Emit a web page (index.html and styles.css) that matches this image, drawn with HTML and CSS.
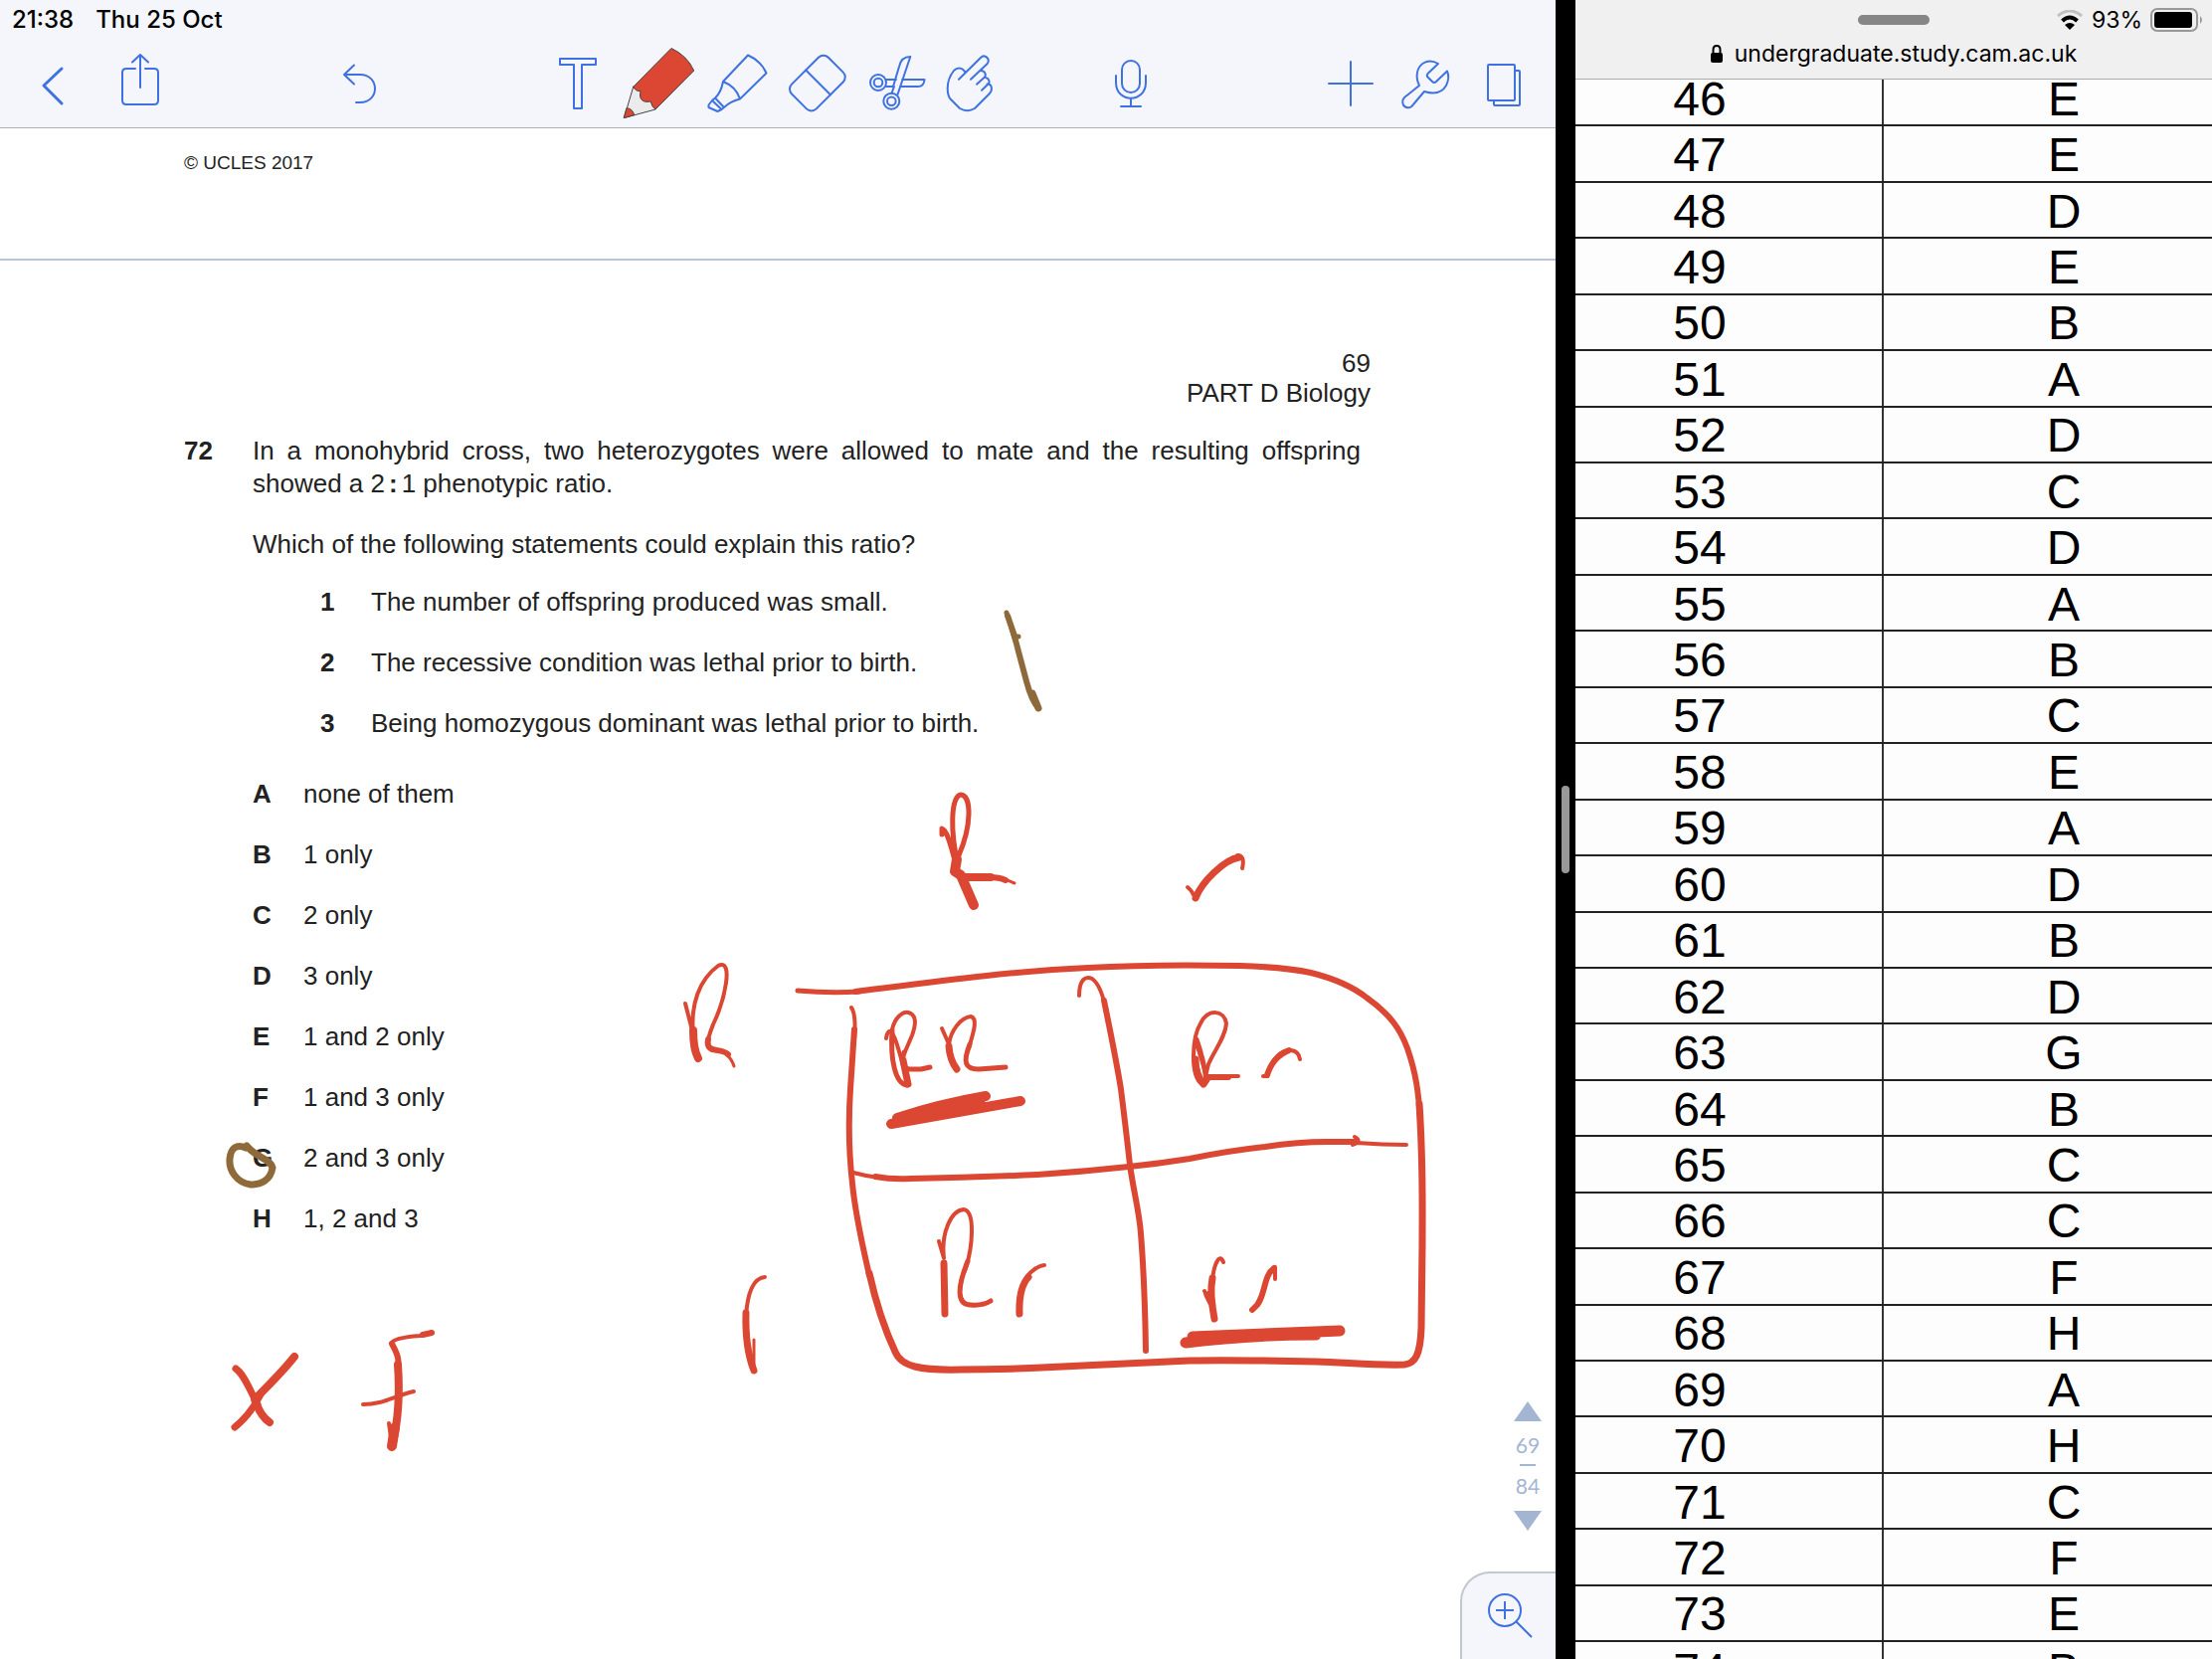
FILE: index.html
```
<!DOCTYPE html>
<html lang="en">
<head>
<meta charset="UTF-8">
<meta name="viewport" content="width=device-width, initial-scale=1.0">
<title>Past paper notes</title>

<link rel="stylesheet" href="styles.css">
</head>

<body>

<main class="notes">
  <header class="topbar">
    <div class="status">
      <span>21:38</span>
      <span>Thu 25 Oct</span>
    </div>

    <nav class="tools">
      <button class="tool" aria-label="Back"><svg viewBox="21 44 80 80"><path class="thick" d="M62 69L44 86L62 104"/></svg></button>
      <button class="tool" aria-label="Share"><svg viewBox="101 44 80 80"><path d="M136 69h-9q-4 0-4 4v28q0 4 4 4h28q4 0 4-4v-28q0-4-4-4h-9M141 88V55M133 62.500l8-7.500 8 7.500"/></svg></button>
      <button class="tool undo" aria-label="Undo"><svg viewBox="321 44 80 80"><path d="M356 65.500L346 75L356 84.500M346 75H362C382 75 382 103 362 103H358"/></svg></button>

      <div class="pens">
        <button class="tool" aria-label="Text"><svg viewBox="541 44 80 80"><path d="M563 59h36v6h-14v44h-8v-44h-14z"/></svg></button>
        <button class="tool" aria-label="Pencil"><svg viewBox="621 44 80 80"><path class="wood" d="M636.700 87.300L627.500 118.500L659 110L654 98z"/><path class="lead" d="M630.300 108.700Q636 109 637.700 115.700L627.500 118.500z"/><path class="lead" d="M636.700 87.300L675 48.500Q691 56 697.700 71L659 110Q655 107 654.300 102Q644 104 643.500 96L644 91.700Q639 92 636.700 87.300z"/></svg></button>
        <button class="tool" aria-label="Highlighter"><svg viewBox="701 44 80 80"><path d="M727 82L752 55.500Q765 61 770.500 73.500L744 99.500Q740 87 727 82zM727 82Q725 93 719 98.500L728 108Q734 102 744 99.500M719 98.500L716 101L725.500 110L728 108M716 101L712.500 105.500V108L721.500 112L725.500 110"/></svg></button>
        <button class="tool" aria-label="Eraser"><svg viewBox="781 44 80 80"><g transform="rotate(-45 822 83.700)"><rect x="796" y="66" width="52" height="35" rx="7"/><path d="M823 66v35"/></g></svg></button>
        <button class="tool" aria-label="Cut"><svg viewBox="861 44 80 80"><circle cx="883" cy="83" r="8"/><circle cx="883" cy="83" r="4.300"/><circle cx="896.300" cy="101.700" r="8"/><circle cx="896.300" cy="101.700" r="4.300"/><path d="M890.700 80H901M890.700 87H899L896.500 93.700M902.500 95L915.300 57Q906 57 904 67L898 87M907 80H929.500Q929 87 923 87H905"/></svg></button>
        <button class="tool" aria-label="Hand"><svg viewBox="941 44 80 80"><path d="M970.700 73C968 68 963 67 959 71C955 76 952.700 83 952.700 89C952.700 94 953 97 956 100L965 109C970 112 975 112 980 109L994 95C999 90 997 84 992.500 84.500M964 79.700L986 58C990 54 996 59 992.700 64L976 79.700M986 71C990 71 992 75 990 77.500L982 84.700M991 78C995 79 995 83 994 84L987 90.700"/></svg></button>
      </div>

      <button class="tool mic" aria-label="Record"><svg viewBox="1097 44 80 80"><rect x="1128" y="61" width="18" height="32" rx="9"/><path d="M1122 76v7c0 21 30 21 30 0v-7M1137 99v8M1127 107h20"/></svg></button>

      <div class="extras">
        <button class="tool" aria-label="Add"><svg viewBox="1318 44 80 80"><path d="M1336 84h44M1358 62v44"/></svg></button>
        <button class="tool" aria-label="Settings"><svg viewBox="1398 44 80 80"><path d="M1446 64C1441 61 1435 61 1431 63.500C1424 68 1423 78 1427 86L1412 98C1409 101 1410 106 1413 107.500C1416 109 1419 108 1421 105L1432 92C1442 95 1450 93 1454 86C1457 80 1457 76 1455 71.500L1444 82Q1442 84 1440 82L1435.500 77.500Q1434 76 1435.500 74z"/></svg></button>
        <button class="tool" aria-label="Pages"><svg viewBox="1478 44 80 80"><rect x="1496" y="65" width="27" height="36" rx="1"/><path d="M1523 71h4q1 0 1 1v33q0 1-1 1h-24q-1 0-1-1v-4"/></svg></button>
      </div>
    </nav>
  </header>

  <section class="last-page">&copy; UCLES 2017</section>

  <section class="page">
    <div class="page-head">69<br>PART D Biology</div>

    <div class="question">
      <b class="number">72</b>
      <div class="body">
        <p class="intro">In a monohybrid cross, two heterozygotes were allowed to mate and the resulting offspring showed a 2<b class="colon">:</b>1 phenotypic ratio.</p>
        <p>Which of the following statements could explain this ratio?</p>

        <ul class="statements">
          <li><b>1</b>The number of offspring produced was small.</li>
          <li><b>2</b>The recessive condition was lethal prior to birth.</li>
          <li><b>3</b>Being homozygous dominant was lethal prior to birth.</li>
        </ul>

        <ul class="options">
          <li><b>A</b>none of them</li>
          <li><b>B</b>1 only</li>
          <li><b>C</b>2 only</li>
          <li><b>D</b>3 only</li>
          <li><b>E</b>1 and 2 only</li>
          <li><b>F</b>1 and 3 only</li>
          <li><b>G</b>2 and 3 only</li>
          <li><b>H</b>1, 2 and 3</li>
        </ul>
      </div>
    </div>
  </section>

  <!-- handwriting layer -->
  <svg class="ink" width="1564" height="1668" viewBox="0 0 1564 1668">
    <g class="brown">
      <path stroke-width="5" d="M1012 616L1021 645M1022 640h2"/>
      <path stroke-width="6" d="M1013 619Q1020 637 1024 655L1032 685Q1037 704 1044 712"/>
      <path stroke-width="7" d="M1038 697L1044 712"/>
      <path stroke-width="7" d="M248 1152C258 1165 271 1164 274 1174C272 1187 262 1191 252 1191C238 1189 230 1177 231 1165C232 1154 238 1150 247 1154"/>
    </g>

    <g class="red">
      <!-- square -->
      <path stroke-width="5" d="M802 996Q835 999 864 997"/>
      <path stroke-width="6" d="M860 997C900 992 945 986 992 981Q1045 975 1094 973C1145 970 1200 970 1247 971C1275 972 1300 974 1318 978C1342 984 1360 992 1374 1003C1398 1020 1408 1035 1415 1054C1424 1080 1426 1098 1428 1125"/>
      <path stroke-width="7" d="M1427 1110C1431 1170 1430 1210 1430 1250L1429 1335C1428 1362 1423 1371 1412 1372C1385 1373 1355 1370 1323 1369C1280 1368 1235 1367 1196 1368C1150 1370 1110 1372 1068 1374Q1015 1377 966 1377C925 1378 906 1374 900 1359Q884 1325 874 1280"/>
      <path stroke-width="6" d="M874 1282Q860 1222 857 1190C853 1155 853 1125 855 1095L859 1035"/>
      <path stroke-width="4" d="M859 1045Q861 1020 856 1013"/>
      <path stroke-width="4" d="M1085 1001C1085 984 1092 981 1098 984C1106 990 1110 1004 1112 1018"/>
      <path stroke-width="6" d="M1110 1006C1117 1040 1123 1070 1127 1095Q1132 1135 1136 1171C1140 1200 1145 1215 1147 1240Q1151 1290 1152 1358"/>
      <path stroke-width="4" d="M858 1179Q880 1185 905 1185"/>
      <path stroke-width="6" d="M880 1183Q897 1186 915 1185Q980 1184 1043 1181Q1090 1178 1135 1173Q1165 1170 1196 1165Q1235 1157 1272 1153Q1305 1148 1334 1148H1364"/>
      <path stroke-width="4" d="M1362 1143Q1370 1147 1360 1151M1364 1149Q1390 1151 1414 1151"/>

      <!-- top row -->
      <path stroke-width="5" d="M947 839V833C953 835 956 852 962 872M963 868C956 840 955 801 966 799C977 800 977 830 964 860"/>
      <path stroke-width="10" d="M962 864L960 876L966 880L979 910"/>
      <path stroke-width="8" d="M967 882H996"/>
      <path stroke-width="6" d="M994 882Q1005 882 1011 885"/>
      <path stroke-width="3" d="M1008 883L1020 888"/>
      <path stroke-width="4" d="M1194 892Q1199 896 1202 904M1244 860Q1252 860 1249 873"/>
      <path stroke-width="7" d="M1202 903C1208 887 1231 864 1246 862"/>

      <!-- left column -->
      <path stroke-width="4" d="M689 1009L697 1040C694 1010 703 985 722 971C738 963 729 1005 717 1030C710 1048 710 1052 716 1056"/>
      <path stroke-width="8" d="M697 1036Q697 1055 702 1064"/>
      <path stroke-width="6" d="M712 1045C709 1060 725 1053 732 1060"/>
      <path stroke-width="3" d="M730 1060Q736 1065 738 1072"/>
      <path stroke-width="4" d="M769 1284C754 1285 749 1310 750 1340"/>
      <path stroke-width="7" d="M750 1320Q749 1355 758 1378"/>
      <path stroke-width="3" d="M758 1347v30"/>

      <!-- RR -->
      <path stroke-width="4" d="M891 1044Q892 1036 896 1037C902 1045 904 1060 908 1070M897 1035C900 1022 908 1017 913 1018C922 1020 921 1030 917 1041L908 1062"/>
      <path stroke-width="5" d="M897 1036C895 1065 900 1090 912 1091M909 1058Q904 1074 915 1075H926L935 1073"/>
      <path stroke-width="7" d="M908 1066L913 1090"/>
      <path stroke-width="4" d="M947 1034L955 1052M954 1050C956 1036 966 1023 976 1022C984 1024 978 1040 974 1054"/>
      <path stroke-width="5" d="M975 1050C968 1068 970 1075 984 1075L1011 1073"/>
      <path stroke-width="7" d="M954 1052Q955 1066 962 1075"/>
      <path stroke-width="10" d="M896 1130L1026 1107M991 1102Q945 1110 902 1124"/>
      <path stroke-width="13" d="M918 1122L984 1107"/>

      <!-- Rr, top right -->
      <path stroke-width="4" d="M1208 1090C1196 1080 1199 1042 1207 1029C1215 1013 1231 1016 1233 1029C1232 1043 1221 1056 1215 1070L1212 1082L1245 1082M1202 1046L1212 1078"/>
      <path stroke-width="5" d="M1203 1045Q1210 1065 1213 1086"/>
      <path stroke-width="7" d="M1202 1065Q1202 1080 1210 1090L1214 1084"/>
      <path stroke-width="4" d="M1270 1082H1274C1278 1065 1288 1055 1298 1056Q1306 1057 1307 1065"/>
      <path stroke-width="6" d="M1274 1081C1278 1068 1286 1060 1296 1056M1214 1083L1235 1083"/>

      <!-- Rr, bottom left -->
      <path stroke-width="4" d="M944 1248L949 1265C946 1240 956 1217 969 1216C981 1218 978 1255 970 1278"/>
      <path stroke-width="5" d="M973 1268C962 1295 962 1312 976 1312Q988 1313 996 1308"/>
      <path stroke-width="7" d="M949 1270L950 1321M1025 1321Q1024 1295 1034 1284"/>
      <path stroke-width="4" d="M1032 1284Q1041 1273 1050 1272"/>

      <!-- rr -->
      <path stroke-width="4" d="M1230 1269C1226 1258 1220 1273 1219 1288M1211 1298L1217 1311M1282 1286V1274"/>
      <path stroke-width="7" d="M1219 1285Q1216 1300 1221 1326M1214 1302L1219 1312"/>
      <path stroke-width="6" d="M1281 1275C1270 1283 1273 1300 1264 1312L1259 1317"/>
      <path stroke-width="11" d="M1192 1350Q1255 1342 1323 1342M1199 1344L1347 1338"/>

      <!-- X F -->
      <path stroke-width="7" d="M237 1376C246 1382 252 1400 259 1412M236 1435Q252 1422 262 1402"/>
      <path stroke-width="8" d="M257 1406C275 1388 285 1378 296 1364M256 1407Q262 1424 271 1430"/>
      <path stroke-width="4" d="M394 1350Q396 1345 422 1343L435 1340M365 1412C385 1412 395 1404 416 1399M391 1431L393 1445"/>
      <path stroke-width="6" d="M425 1342L434 1340M394 1351C400 1362 401 1365 401 1380"/>
      <path stroke-width="8" d="M400 1372C402 1400 401 1425 395 1450"/>
      <path stroke-width="10" d="M397 1435L394 1454"/>
    </g>
  </svg>

  <nav class="pager">
    <button aria-label="Previous page"><svg width="28" height="20" viewBox="0 0 28 20"><path d="M14 0L28 20H0z"/></svg></button>
    <span>69</span>
    <i></i>
    <span>84</span>
    <button aria-label="Next page"><svg width="28" height="20" viewBox="0 0 28 20"><path d="M0 0H28L14 20z"/></svg></button>
  </nav>

  <button class="zoom" aria-label="Zoom in"><svg width="60" height="60" viewBox="0 0 60 60"><circle cx="25" cy="25" r="16"/><path d="M25 16v18M16 25h18M36 36l16 16"/></svg></button>
</main>

<div class="divider"></div>

<aside class="browser">
  <header class="safari">
    <div class="grabber"></div>
    <div class="battery">
      <svg width="28" height="20" viewBox="0 0 28 20"><path class="faint" d="M2 6Q14-4 26 6"/><path class="arc" d="M6.500 11Q14 4 21.500 11"/><path class="dot" d="M14 20L9 15Q14 11 19 15z"/></svg>
      <span>93%</span>
      <svg width="54" height="24" viewBox="0 0 54 24"><rect class="case" x="1" y="1" width="46" height="22" rx="6"/><rect x="4" y="4" width="38" height="16" rx="3"/><path class="nub" d="M50 8q4 4 0 8z"/></svg>
    </div>
    <div class="address">
      <svg width="12" height="18" viewBox="0 0 12 18"><path class="shackle" d="M2.500 9V5Q2.500 1 6 1T9.500 5V9"/><rect y="8" width="12" height="10" rx="2"/></svg>
      <span>undergraduate.study.cam.ac.uk</span>
    </div>
  </header>

  <div class="sheet">
    <table>
      <tbody id="answers"></tbody>
    </table>
  </div>
</aside>

<script>
const first = 46;
const answers = "EEDEBADCDABCEADBDGBCCFHAHCFEB";

document.getElementById("answers").innerHTML = answers
  .split("")
  .map((a, i) => `<tr><td>${first + i}</td><td>${a}</td></tr>`)
  .join("");
</script>

</body>
</html>
```

FILE: styles.css
```
* {
  box-sizing: border-box;
}

body {
  margin: 0;
  height: 100vh;
  display: grid;
  grid-template-columns: minmax(0, 1fr) 20px 640px;
  overflow: hidden;
  background: #fff;
  font-family: "Liberation Sans", Arial, sans-serif;
}

button {
  border: none;
  background: none;
  padding: 0;
  cursor: pointer;
}

svg {
  display: block;
}

/* notes app */
.notes {
  position: relative;
  overflow: hidden;
  color: #222;
}

.topbar {
  background: #f4f6fb;
  border-bottom: 1px solid #afb0b5;
}

.status {
  display: flex;
  gap: 22px;
  height: 44px;
  padding: 5px 12px;
  font: 500 24px/30px Inter, sans-serif;
  color: #000;
}

.tools {
  display: flex;
  height: 84px;
  padding: 0 6px 0 21px;
}

.tool {
  width: 80px;
  height: 80px;
}

.tool svg {
  width: 80px;
  height: 80px;
  fill: none;
  stroke: #3f72e0;
  stroke-width: 2;
  stroke-linecap: round;
  stroke-linejoin: round;
}

.tool .thick {
  stroke-width: 3;
}

.tool .wood {
  fill: #ebebeb;
  stroke: #444;
  stroke-width: 1;
}

.tool .lead {
  fill: #db4732;
  stroke: #444;
  stroke-width: 1;
}

.undo,
.pens {
  margin-left: 140px;
}

.pens,
.extras {
  display: flex;
}

.mic {
  margin-left: 76px;
}

.extras {
  margin-left: auto;
}

.last-page {
  height: 133px;
  padding: 24px 185px;
  border-bottom: 2px solid #b8c5dd;
  font-size: 19px;
  line-height: 22px;
}

.page {
  padding: 88px 186px 0 185px;
  font-size: 26px;
  line-height: 33px;
}

.page-head {
  text-align: right;
  line-height: 30px;
}

.question {
  display: flex;
  margin-top: 27px;
  padding-right: 10px;
}

.number {
  flex: none;
  width: 69px;
}

.body {
  flex: 1;
}

.body p {
  margin: 0 0 28px;
}

.intro {
  text-align: justify;
}

.colon {
  margin: 0 4px;
}

.body ul {
  display: flex;
  flex-direction: column;
  gap: 28px;
  margin: 0;
  padding: 0;
  list-style: none;
}

.body li {
  display: flex;
}

.body li b {
  width: 51px;
}

.body .statements {
  margin: -3px 0 38px;
  padding-left: 68px;
}

.ink {
  position: absolute;
  top: 0;
  left: 0;
  fill: none;
  stroke-linecap: round;
  stroke-linejoin: round;
  pointer-events: none;
}

.red {
  stroke: #db4732;
}

.brown {
  stroke: #8e6a3b;
}

.pager {
  position: absolute;
  right: 14px;
  bottom: 129px;
  width: 28px;
  display: flex;
  flex-direction: column;
  align-items: center;
  color: #a3b5d3;
  font: 21px/30px Lato, sans-serif;
}

.pager svg {
  fill: #a3b5d3;
}

.pager span {
  margin: 5px 0;
}

.pager span:first-of-type {
  margin: 9px 0 4px;
}

.pager button:last-child {
  margin-top: 5px;
}

.pager i {
  width: 16px;
  height: 2px;
  background: #a3b5d3;
}

.zoom {
  position: absolute;
  right: 0;
  bottom: 0;
  display: flex;
  align-items: flex-start;
  width: 96px;
  height: 88px;
  padding: 12px 0 0 18px;
  background: #f4f6fb;
  border: 2px solid #c2c7d0;
  border-width: 2px 0 0 2px;
  border-top-left-radius: 30px;
}

.zoom svg {
  fill: none;
  stroke: #3f72e0;
  stroke-width: 2;
}

/* split view bar */
.divider {
  display: flex;
  align-items: center;
  justify-content: center;
  background: #000;
}

.divider::before {
  content: "";
  width: 8px;
  height: 88px;
  border-radius: 4px;
  background: #999;
}

/* browser */
.browser {
  display: flex;
  flex-direction: column;
  overflow: hidden;
  background: #fdfdfd;
  color: #000;
}

.safari {
  position: relative;
  z-index: 1;
  flex: none;
  height: 80px;
  background: #f0f0f0;
  border-bottom: 1px solid #acacac;
  font: 23px/30px Inter, sans-serif;
}

.grabber {
  width: 72px;
  height: 10px;
  margin: 15px auto 0;
  border-radius: 5px;
  background: #868686;
}

.battery {
  position: absolute;
  top: 5px;
  right: 8px;
  display: flex;
  align-items: center;
  gap: 8px;
}

.faint {
  fill: none;
  stroke: #c0c0c0;
  stroke-width: 3;
}

.arc,
.shackle {
  fill: none;
  stroke: #000;
  stroke-width: 4;
}

.shackle {
  stroke-width: 2;
}

.case {
  fill: none;
  stroke: #999;
  stroke-width: 2;
}

.nub {
  fill: #999;
}

.address {
  display: flex;
  align-items: center;
  justify-content: center;
  gap: 12px;
  margin-top: 14px;
}

.sheet {
  flex: 1;
  overflow: hidden;
}

/* first row is scrolled partly under the address bar */
.sheet table {
  width: 100%;
  height: 1637px;
  margin-top: -9px;
  border-collapse: collapse;
  font-size: 48px;
  line-height: 48px;
}

.sheet td {
  padding: 3px 0 0 32px;
  border-bottom: 2px solid #222;
  text-align: center;
}

.sheet td:first-child {
  width: 309px;
  padding: 3px 58px 0 0;
  border-right: 2px solid #333;
}
```
